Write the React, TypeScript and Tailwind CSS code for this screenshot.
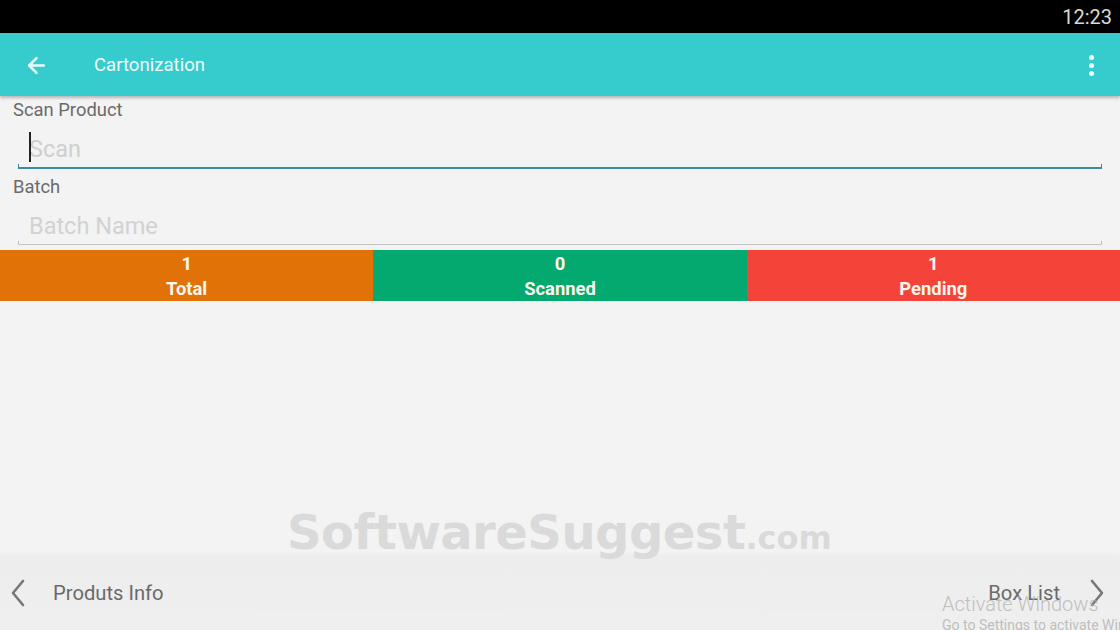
import { ArrowLeft } from "lucide-react";

const stats = [
  { value: 1, label: "Total", color: "bg-[#e07208]" },
  { value: 0, label: "Scanned", color: "bg-[#03a96e]" },
  { value: 1, label: "Pending", color: "bg-[#f44439]" },
];

function Chevron({ dir }: { dir: "left" | "right" }) {
  return (
    <svg width="18" height="28" viewBox="0 0 18 28" className="text-[#777]">
      <path
        d={dir === "left" ? "M14 2 L4 14 L14 26" : "M4 2 L14 14 L4 26"}
        fill="none"
        stroke="currentColor"
        strokeWidth="2.6"
        strokeLinecap="round"
        strokeLinejoin="round"
      />
    </svg>
  );
}

export default function App() {
  return (
    <div className="relative flex h-[630px] w-[1120px] flex-col overflow-hidden bg-[#f3f3f3] font-['Roboto','Liberation_Sans',sans-serif]">
      {/* status bar */}
      <div className="flex h-[33px] shrink-0 items-center justify-end bg-black pr-[8px]">
        <span className="text-[20px] leading-none text-[#d9d9d9]">12:23</span>
      </div>

      {/* app bar */}
      <div className="relative z-10 flex h-[63px] shrink-0 items-center bg-[#36cbcc] pt-[2px] shadow-[0_2px_3px_rgba(0,0,0,0.25)]">
        <ArrowLeft size={25} strokeWidth={2.4} className="ml-[24px] text-[#f0fdfd]" />
        <span className="ml-[45px] text-[18.6px] text-[#eefcfc]">Cartonization</span>
        <div className="ml-auto mr-[26px] flex flex-col gap-[3px]">
          <span className="h-[5px] w-[5px] rounded-full bg-[#eefcfc]" />
          <span className="h-[5px] w-[5px] rounded-full bg-[#eefcfc]" />
          <span className="h-[5px] w-[5px] rounded-full bg-[#eefcfc]" />
        </div>
      </div>

      {/* form */}
      <div className="flex flex-1 flex-col">
        <div className="pl-[13px] pt-[2px] text-[18.4px] leading-[24px] text-[#6a6a6a]">Scan Product</div>
        <div className="relative mx-[18px] flex h-[47px] items-end pb-[5px]">
          <span className="absolute left-[11px] top-[10px] h-[30px] w-[1.5px] bg-[#222]" />
          <span className="pl-[11px] text-[23.5px] leading-[30px] text-[#cfcfcf]">Scan</span>
          <div className="absolute inset-x-0 bottom-0 h-[5px] border-x-[1.5px] border-b-2 border-[#3a8d9f]" />
        </div>

        <div className="pl-[13px] pt-[8px] text-[18.4px] leading-[20px] text-[#6a6a6a]">Batch</div>
        <div className="relative mx-[18px] flex h-[48px] items-end pb-[4px]">
          <span className="pl-[11px] text-[23.5px] leading-[30px] text-[#d2d2d2]">Batch Name</span>
          <div className="absolute inset-x-0 bottom-0 h-[4px] border-x border-b border-[#c4c4c4]" />
        </div>

        <div className="mt-[5px] grid h-[50px] grid-cols-3">
          {stats.map((s) => (
            <div key={s.label} className={`${s.color} flex flex-col items-center pt-[1px] text-[18.4px] font-bold leading-[25px] text-[#fdf6ee]`}>
              <span>{s.value}</span>
              <span>{s.label}</span>
            </div>
          ))}
        </div>
      </div>

      {/* bottom navigation */}
      <div className="flex h-[74px] shrink-0 items-center bg-gradient-to-b from-[#ededed] to-[#efefef] shadow-[0_-2px_4px_rgba(0,0,0,0.03)]">
        <div className="ml-[9px]">
          <Chevron dir="left" />
        </div>
        <span className="ml-[26px] text-[20.2px] text-[#6a6a6a]">Produts Info</span>
        <span className="ml-auto text-[20.2px] text-[#6a6a6a]">Box List</span>
        <div className="ml-[28px] mr-[14px]">
          <Chevron dir="right" />
        </div>
      </div>

      {/* watermark */}
      <div className="pointer-events-none absolute left-[287px] top-[500px] flex items-baseline text-[#dadada]">
        <span className="font-['DejaVu_Sans',sans-serif] text-[48px] font-bold leading-[64px] tracking-[-0.5px]">SoftwareSuggest</span>
        <span className="font-['DejaVu_Sans',sans-serif] text-[32px] font-bold leading-[40px]">.com</span>
      </div>

      {/* activation overlay */}
      <div className="pointer-events-none absolute left-[942px] top-[592px] whitespace-nowrap text-[#b4b4b4]">
        <div className="text-[20px] font-light leading-[24px] opacity-80">Activate Windows</div>
        <div className="text-[14px] leading-[18px] opacity-80">Go to Settings to activate Windows.</div>
      </div>
    </div>
  );
}
